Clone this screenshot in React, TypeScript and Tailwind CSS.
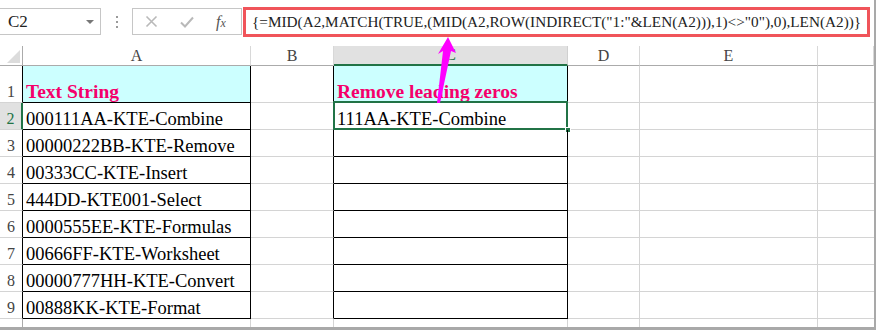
import React from 'react';

const ROWS = [
  'Text String',
  '000111AA-KTE-Combine',
  '00000222BB-KTE-Remove',
  '00333CC-KTE-Insert',
  '444DD-KTE001-Select',
  '0000555EE-KTE-Formulas',
  '00666FF-KTE-Worksheet',
  '00000777HH-KTE-Convert',
  '00888KK-KTE-Format',
];

const FORMULA = '{=MID(A2,MATCH(TRUE,(MID(A2,ROW(INDIRECT("1:"&LEN(A2))),1)<>"0"),0),LEN(A2))}';

function Toolbar() {
  return (
    <div className="relative h-[46px] flex items-start pt-[8px]">
      {/* name box */}
      <div className="w-[101px] h-[27px] border border-l-0 border-[#c6c6c6] flex items-center justify-between pl-[8px] pr-[6px]">
        <span className="text-[17px] text-[#222]">C2</span>
        <span className="w-0 h-0 border-l-[4px] border-r-[4px] border-t-[4px] border-l-transparent border-r-transparent border-t-[#777]" />
      </div>
      {/* grip dots */}
      <div className="w-[31px] h-[27px] flex flex-col items-center justify-center gap-[3px]">
        <span className="w-[2px] h-[2px] bg-[#9a9a9a]" />
        <span className="w-[2px] h-[2px] bg-[#9a9a9a]" />
        <span className="w-[2px] h-[2px] bg-[#9a9a9a]" />
      </div>
      {/* cancel / enter / fx */}
      <div className="w-[110px] h-[27px] border border-[#c6c6c6] flex items-center pl-[12px] gap-[22px]">
        <svg width="13" height="13" viewBox="0 0 13 13" className="shrink-0">
          <path d="M1.5 1.5 L11.5 11.5 M11.5 1.5 L1.5 11.5" stroke="#b9b9b9" strokeWidth="1.6" fill="none" />
        </svg>
        <svg width="14" height="12" viewBox="0 0 14 12" className="shrink-0">
          <path d="M1 6.5 L5 10.5 L13 1.5" stroke="#b9b9b9" strokeWidth="2" fill="none" />
        </svg>
        <span className="italic text-[16px] text-[#555] leading-none">
          f<span className="text-[12px]">x</span>
        </span>
      </div>
      {/* formula input, highlighted */}
      <div className="ml-[1px] w-[627px] h-[30px] -mt-[1px] border-[3px] border-[#f0545a] flex items-center pl-[6px] overflow-hidden">
        <span className="text-[15.25px] text-[#222] whitespace-nowrap">{FORMULA}</span>
      </div>
    </div>
  );
}

function HeaderRow() {
  const cols = ['A', 'B', 'C', 'D', 'E', ''];
  return (
    <>
      <div className="h-[20px] border-r border-b border-[#ababab] relative">
        <svg width="23" height="20" viewBox="0 0 23 20" className="absolute left-0 top-0">
          <polygon points="7,17 20,17 20,4" fill="#dcdcdc" />
        </svg>
      </div>
      {cols.map((c) =>
        c === 'C' ? (
          <div
            key={c}
            className="h-[20px] bg-[#e1e1e1] border-r border-[#d0d0d0] border-b-[2px] border-b-[#217346] flex items-center justify-center text-[16px] text-[#217346]"
          >
            {c}
          </div>
        ) : (
          <div
            key={c || 'f'}
            className="h-[20px] border-r border-r-[#d8d8d8] border-b border-b-[#ababab] flex items-center justify-center text-[16px] text-[#444]"
          >
            {c}
          </div>
        )
      )}
    </>
  );
}

function Row({ n }: { n: number }) {
  const isHead = n === 1;
  const inTable = n <= 9;
  const selected = n === 2;
  const h = isHead ? 'h-[37px]' : 'h-[27px]';
  const text = ROWS[n - 1];
  const cellText = isHead
    ? 'bg-[#ccffff] text-[#f5006b] font-bold text-[19.5px]'
    : 'text-black text-[18.5px]';

  return (
    <>
      {/* row number */}
      <div
        className={`${h} border-b border-b-[#d4d4d4] flex items-end justify-center pb-[1px] text-[16px] leading-[18px] ${
          selected
            ? 'bg-[#e1e1e1] text-[#217346] border-r-[2px] border-r-[#217346]'
            : inTable
            ? 'text-[#444] border-r border-r-black'
            : 'text-[#444] border-r border-r-[#ababab]'
        }`}
      >
        {n}
      </div>
      {/* A */}
      <div
        className={`${h} border-r border-b flex items-end pl-[3px] leading-[20px] whitespace-nowrap ${
          inTable ? 'border-black' : 'border-[#d4d4d4]'
        } ${cellText}`}
      >
        {text}
      </div>
      {/* B */}
      <div className={`${h} border-b border-b-[#d4d4d4] border-r ${inTable ? 'border-r-black' : 'border-r-[#d4d4d4]'}`} />
      {/* C */}
      <div
        className={`${h} relative border-r border-b flex items-end pl-[3px] leading-[20px] whitespace-nowrap ${
          inTable ? 'border-black' : 'border-[#d4d4d4]'
        } ${cellText}`}
      >
        {isHead && 'Remove leading zeros'}
        {selected && '111AA-KTE-Combine'}
        {selected && (
          <>
            <div className="absolute -left-[1px] -top-[2px] -right-[1px] -bottom-[1px] border-[2px] border-[#217346]" />
            <div className="absolute -right-[4px] -bottom-[4px] w-[6px] h-[6px] bg-[#217346] border border-white" />
          </>
        )}
      </div>
      {/* D, E, F */}
      <div className={`${h} border-r border-b border-[#d4d4d4]`} />
      <div className={`${h} border-r border-b border-[#d4d4d4]`} />
      <div className={`${h} border-b border-[#d4d4d4]`} />
    </>
  );
}

export default function App() {
  return (
    <div className="relative w-[876px] h-[330px] overflow-hidden bg-white border-r-[2px] border-b-[3px] border-[#a9a9a9] font-['Liberation_Serif','Times_New_Roman',serif]">
      <Toolbar />
      <div className="grid grid-cols-[23px_228px_83px_234px_72px_178px_1fr]">
        <HeaderRow />
        {[1, 2, 3, 4, 5, 6, 7, 8, 9, 10].map((n) => (
          <Row key={n} n={n} />
        ))}
      </div>

      {/* callout arrow */}
      <svg className="absolute left-0 top-0 pointer-events-none" width="876" height="330" viewBox="0 0 876 330">
        <polygon points="448,37 456,53 451,51 440,103 437,103 443,51 438,54" fill="#ff00ff" />
      </svg>
    </div>
  );
}
